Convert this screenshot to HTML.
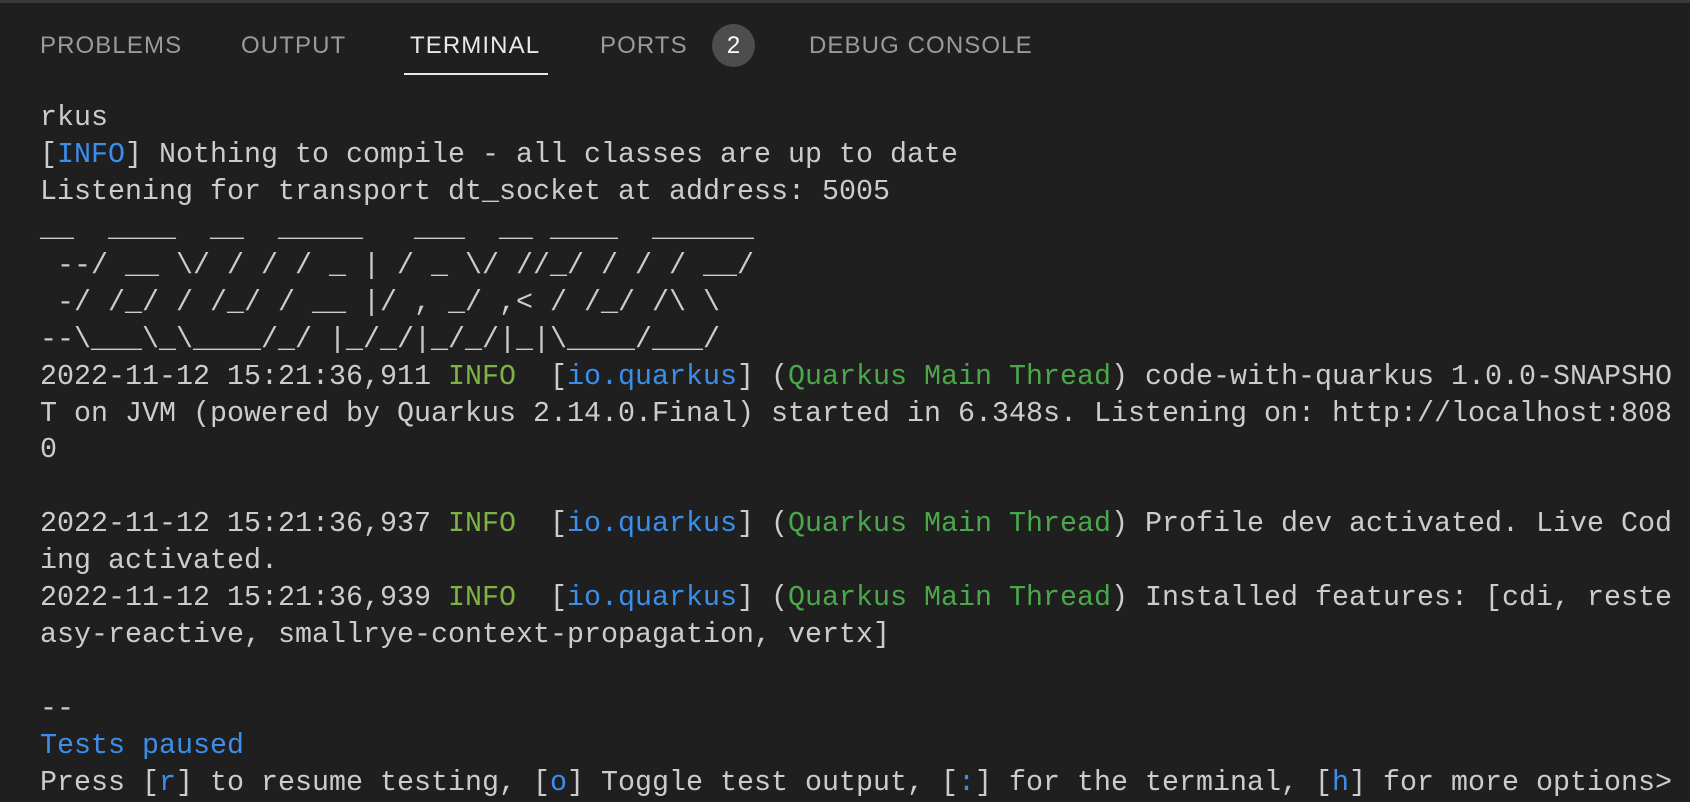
<!DOCTYPE html>
<html><head><meta charset="utf-8"><style>
html,body{margin:0;padding:0;background:#1f1f1f;width:1690px;height:802px;overflow:hidden}
.top{position:absolute;left:0;top:0;width:1690px;height:3px;background:#3a3a3a}
.tab{position:absolute;top:31px;font-family:"Liberation Sans",sans-serif;font-size:24px;letter-spacing:1.1px;color:#9a9a9a;line-height:30px}
.act{color:#e8e8e8}
.ul{position:absolute;left:404px;top:73px;width:144px;height:2px;background:#e8e8e8}
.badge{position:absolute;left:712px;top:24px;width:43px;height:43px;border-radius:50%;background:#4d4d4d;color:#fff;font-family:"Liberation Sans",sans-serif;font-size:24px;text-align:center;line-height:43px}
pre{position:absolute;left:40px;top:100px;margin:0;font-family:"Liberation Mono",monospace;font-size:28.33px;line-height:36.94px;color:#cccccc}
.b{color:#3b8eea}.g{color:#7db343}.t{color:#4aa84a}
</style></head><body>
<div class="top"></div>
<div class="tab" style="left:40px">PROBLEMS</div>
<div class="tab" style="left:241px">OUTPUT</div>
<div class="tab act" style="left:410px">TERMINAL</div>
<div class="tab" style="left:600px">PORTS</div>
<div class="badge">2</div>
<div class="tab" style="left:809px">DEBUG CONSOLE</div>
<div class="ul"></div>
<pre>rkus
[<span class="b">INFO</span>] Nothing to compile - all classes are up to date
Listening for transport dt_socket at address: 5005
__  ____  __  _____   ___  __ ____  ______
 --/ __ \/ / / / _ | / _ \/ //_/ / / / __/
 -/ /_/ / /_/ / __ |/ , _/ ,&lt; / /_/ /\ \
--\___\_\____/_/ |_/_/|_/_/|_|\____/___/
2022-11-12 15:21:36,911 <span class="g">INFO</span>  [<span class="b">io.quarkus</span>] (<span class="t">Quarkus Main Thread</span>) code-with-quarkus 1.0.0-SNAPSHO
T on JVM (powered by Quarkus 2.14.0.Final) started in 6.348s. Listening on: http://localhost:808
0

2022-11-12 15:21:36,937 <span class="g">INFO</span>  [<span class="b">io.quarkus</span>] (<span class="t">Quarkus Main Thread</span>) Profile dev activated. Live Cod
ing activated.
2022-11-12 15:21:36,939 <span class="g">INFO</span>  [<span class="b">io.quarkus</span>] (<span class="t">Quarkus Main Thread</span>) Installed features: [cdi, reste
asy-reactive, smallrye-context-propagation, vertx]

--
<span class="b">Tests paused</span>
Press [<span class="b">r</span>] to resume testing, [<span class="b">o</span>] Toggle test output, [<span class="b">:</span>] for the terminal, [<span class="b">h</span>] for more options&gt;</pre>
</body></html>
